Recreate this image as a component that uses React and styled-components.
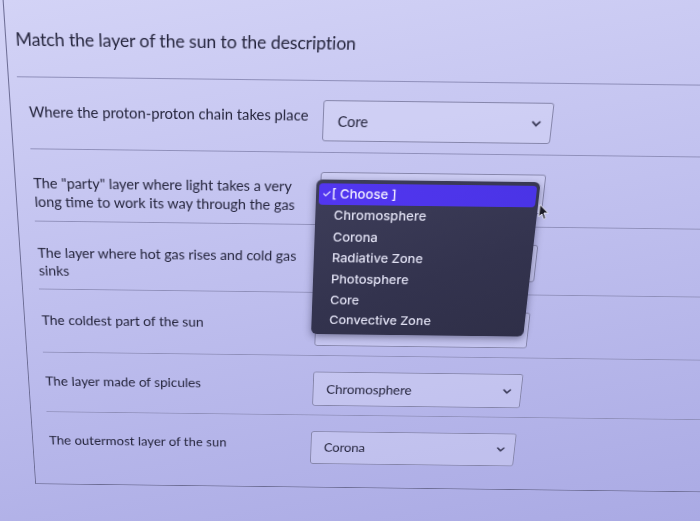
import React from "react";
import styled, { createGlobalStyle } from "styled-components";

const GlobalStyle = createGlobalStyle`
  html, body {
    margin: 0;
    padding: 0;
    width: 700px;
    height: 521px;
    overflow: hidden;
  }
  body {
    background: linear-gradient(170deg, #d3d3f6 0%, #c1c1ef 45%, #aaaae4 100%);
    font-family: "Lato", "Open Sans", sans-serif;
    color: #25253d;
  }
`;

// the photo was taken at an angle, so the whole page is tilted a little
const Stage = styled.div`
  width: 820px;
  height: 560px;
  transform-origin: 248px 113px;
  transform: perspective(500px) rotate(0.7deg) rotateX(-9.5deg);
`;

const Card = styled.div`
  position: relative;
  margin-left: 10px;
  border-left: 1px solid #6c6c94;
  border-bottom: 1px solid #6c6c94;
  padding-bottom: 19px;
`;

const Header = styled.div`
  padding: 32px 0 26px 9px;
`;

const Title = styled.h1`
  margin: 0;
  font-size: 17.3px;
  font-weight: 400;
  letter-spacing: -0.1px;
`;

const HeaderRule = styled.div`
  margin-left: 8px;
  border-top: 1px solid #8f8fba;
`;

const Rows = styled.div`
  margin-left: 17px;
`;

const Row = styled.div`
  display: grid;
  grid-template-columns: 285px 230px;
  column-gap: 9px;
  align-items: start;
  padding: ${(p) => (p.first ? "19px" : "19.6px")} 0 11px 1px;
  border-bottom: ${(p) => (p.last ? "none" : "1px solid #8f8fba")};
`;

const Label = styled.div`
  padding-top: 5px;
  font-size: 14.8px;
  line-height: 20px;
`;

const SelectWrap = styled.div`
  position: relative;
`;

const SelectBox = styled.div`
  display: flex;
  align-items: center;
  justify-content: space-between;
  height: 42px;
  box-sizing: border-box;
  padding: 0 10px 0 14px;
  border: 1px solid #8585aa;
  border-radius: 3px;
  background: rgba(220, 220, 250, 0.35);
  font-size: 14.5px;
`;

const Chevron = () => (
  <svg width="10" height="7" viewBox="0 0 10 7">
    <path d="M1 1.2 L5 5.2 L9 1.2" fill="none" stroke="#3a3a58" strokeWidth="1.8" />
  </svg>
);

const Menu = styled.div`
  position: absolute;
  z-index: 2;
  left: -4px;
  top: 8px;
  width: 229px;
  box-sizing: border-box;
  padding: 4px 3px;
  border-radius: 6px;
  background: linear-gradient(160deg, #3e3e5a 0%, #33334e 60%, #2f2f48 100%);
  box-shadow: 0 3px 8px rgba(20, 20, 50, 0.45);
  font-family: "Inter", "Liberation Sans", sans-serif;
  font-size: 13.5px;
  font-weight: 500;
  color: #e6e6f6;
`;

const MenuItem = styled.div`
  position: relative;
  height: 23.6px;
  line-height: 23.6px;
  padding-left: ${(p) => (p.checked ? "13px" : "16px")};
  border-radius: 4px;
  background: ${(p) => (p.active ? "linear-gradient(90deg, #5236f0, #4a34e6)" : "transparent")};
  color: ${(p) => (p.active ? "#f4f2ff" : "#e2e2f4")};
`;

const Check = styled.span`
  position: absolute;
  left: 3px;
  top: 0;
  font-size: 11px;
`;

const Cursor = styled.svg`
  position: absolute;
  z-index: 3;
  left: 226px;
  top: 31px;
`;

const questions = [
  { label: "Where the proton-proton chain takes place", value: "Core" },
  {
    label: "The \"party\" layer where light takes a very long time to work its way through the gas",
    value: "",
    open: true,
  },
  { label: "The layer where hot gas rises and cold gas sinks", value: "" },
  { label: "The coldest part of the sun", value: "" },
  { label: "The layer made of spicules", value: "Chromosphere" },
  { label: "The outermost layer of the sun", value: "Corona" },
];

const options = [
  "[ Choose ]",
  "Chromosphere",
  "Corona",
  "Radiative Zone",
  "Photosphere",
  "Core",
  "Convective Zone",
];

export default function App() {
  return (
    <>
      <GlobalStyle />
      <Stage>
        <Card>
          <Header>
            <Title>Match the layer of the sun to the description</Title>
          </Header>
          <HeaderRule />
          <Rows>
            {questions.map((q, i) => (
              <Row key={i} first={i === 0} last={i === questions.length - 1}>
                <Label>{q.label}</Label>
                <SelectWrap>
                  <SelectBox>
                    <span>{q.value}</span>
                    <Chevron />
                  </SelectBox>
                  {q.open && (
                    <>
                      <Menu>
                        {options.map((o, j) => (
                          <MenuItem key={o} active={j === 0} checked={j === 0}>
                            {j === 0 && <Check>✓</Check>}
                            {o}
                          </MenuItem>
                        ))}
                      </Menu>
                      <Cursor width="12" height="18" viewBox="0 0 12 18">
                        <path d="M1 1 L1 14 L4 11 L6.5 16.5 L8.5 15.5 L6 10 L10.5 10 Z" fill="#1b1b26" stroke="#e8e8f4" strokeWidth="1" />
                      </Cursor>
                    </>
                  )}
                </SelectWrap>
              </Row>
            ))}
          </Rows>
        </Card>
      </Stage>
    </>
  );
}
